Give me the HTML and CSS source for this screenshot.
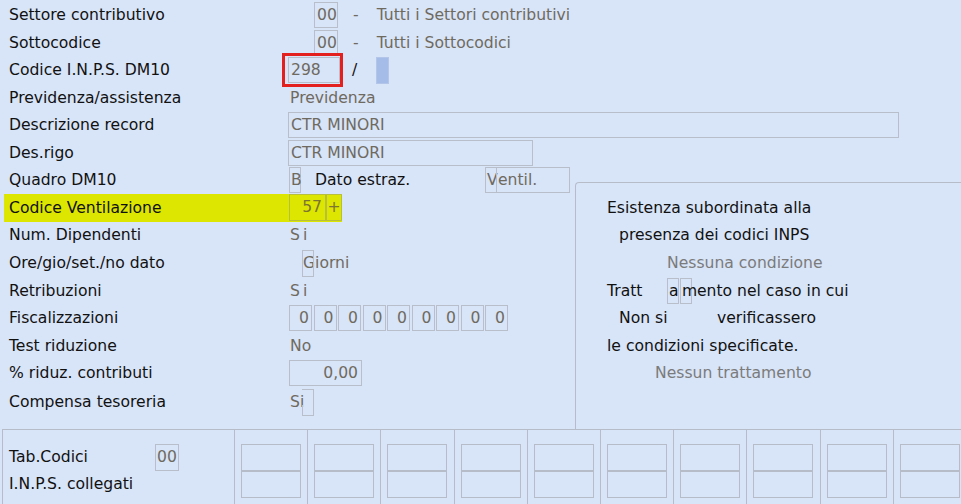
FILE: index.html
```html
<!DOCTYPE html>
<html>
<head>
<meta charset="utf-8">
<link rel="stylesheet" href="styles.css">
</head>
<body>
<div class="screen">
  <div class="form">
    <div class="row"><span class="lbl">Settore contributivo</span><span class="val"><span class="box code">00</span><span class="dash">-</span><span class="desc">Tutti i Settori contributivi</span></span></div>
    <div class="row"><span class="lbl">Sottocodice</span><span class="val"><span class="box code">00</span><span class="dash">-</span><span class="desc">Tutti i Sottocodici</span></span></div>
    <div class="row"><span class="lbl">Codice I.N.P.S. DM10</span><span class="val"><span class="box inps marked">298</span><span class="slash">/</span><span class="bluebox"></span></span></div>
    <div class="row"><span class="lbl">Previdenza/assistenza</span><span class="val"><span class="plain">Previdenza</span></span></div>
    <div class="row"><span class="lbl">Descrizione record</span><span class="val"><span class="box wide">CTR MINORI</span></span></div>
    <div class="row"><span class="lbl">Des.rigo</span><span class="val"><span class="box mid">CTR MINORI</span></span></div>
  </div>
  <div class="middle">
    <div class="form">
      <div class="row"><span class="lbl">Quadro DM10</span><span class="val"><span class="box narrow b">B</span><span class="estr">Dato estraz.</span><span class="box narrow v">V</span><span class="box ventil">entil.</span></span></div>
      <div class="row hl"><span class="lbl">Codice Ventilazione</span><span class="val"><span class="box ybox num">57</span><span class="box ybox plus">+</span></span></div>
      <div class="row"><span class="lbl">Num. Dipendenti</span><span class="val"><span class="plain spaced">Si</span></span></div>
      <div class="row"><span class="lbl">Ore/gio/set./no dato</span><span class="val"><span class="gbox">Giorni</span></span></div>
      <div class="row"><span class="lbl">Retribuzioni</span><span class="val"><span class="plain spaced">Si</span></span></div>
      <div class="row"><span class="lbl">Fiscalizzazioni</span><span class="val fisc"><span class="box digit">0</span><span class="box digit">0</span><span class="box digit">0</span><span class="box digit">0</span><span class="box digit">0</span><span class="box digit">0</span><span class="box digit">0</span><span class="box digit">0</span><span class="box digit">0</span></span></div>
      <div class="row"><span class="lbl">Test riduzione</span><span class="val"><span class="plain">No</span></span></div>
      <div class="row"><span class="lbl">% riduz. contributi</span><span class="val"><span class="box perc num">0,00</span></span></div>
      <div class="row"><span class="lbl">Compensa tesoreria</span><span class="val"><span class="sibox">Si</span></span></div>
    </div>
    <div class="panel">
      <div class="pl">Esistenza subordinata alla</div>
      <div class="pl in1">presenza dei codici INPS</div>
      <div class="pl grey in2">Nessuna condizione</div>
      <div class="pl"><span class="tratt">Tratt</span><span class="box pbox">a</span><span class="box pbox mbox">m</span><span class="ento">ento nel caso in cui</span></div>
      <div class="pl in1"><span class="nonsi">Non si</span><span>verificassero</span></div>
      <div class="pl">le condizioni specificate.</div>
      <div class="pl grey in3">Nessun trattamento</div>
    </div>
  </div>
  <div class="bottom">
    <div class="tab">
      <span class="blbl">Tab.Codici</span><span class="box tabbox">00</span>
      <span class="blbl">I.N.P.S. collegati</span><span></span>
    </div>
    <div class="col"><span class="cbox"></span><span class="cbox"></span></div>
    <div class="col"><span class="cbox"></span><span class="cbox"></span></div>
    <div class="col"><span class="cbox"></span><span class="cbox"></span></div>
    <div class="col"><span class="cbox"></span><span class="cbox"></span></div>
    <div class="col"><span class="cbox"></span><span class="cbox"></span></div>
    <div class="col"><span class="cbox"></span><span class="cbox"></span></div>
    <div class="col"><span class="cbox"></span><span class="cbox"></span></div>
    <div class="col"><span class="cbox"></span><span class="cbox"></span></div>
    <div class="col"><span class="cbox"></span><span class="cbox"></span></div>
    <div class="col"><span class="cbox"></span><span class="cbox"></span></div>
  </div>
</div>
</body>
</html>
```
FILE: styles.css
```css
html, body {
  margin: 0;
  padding: 0;
}
body {
  background: #d8e4f7;
  font-family: "DejaVu Sans", Verdana, sans-serif;
  font-size: 15.6px;
  color: #111;
  width: 961px;
  height: 504px;
  overflow: hidden;
}
.screen {
  padding-top: 1.2px;
  height: 504px;
  box-sizing: border-box;
  display: flex;
  flex-direction: column;
}
.row {
  display: grid;
  grid-template-columns: 284px auto;
  height: 27.57px;
  align-items: center;
  margin-left: 4px;
  white-space: nowrap;
}
.row.hl {
  width: max-content;
  background: #dce600;
}
.lbl {
  padding-left: 5px;
}
.val {
  display: flex;
  align-items: center;
  color: #6f6a60;
}
.box {
  display: inline-block;
  box-sizing: border-box;
  height: 26px;
  line-height: 24px;
  border: 1px solid #b9bfca;
  padding: 0 2px;
  color: #6f6a60;
  white-space: nowrap;
  overflow: hidden;
}
.code {
  margin-left: 26px;
  width: 24px;
  padding: 0 0 0 2px;
}
.dash {
  margin-left: 15px;
}
.desc {
  margin-left: 18px;
}
.inps {
  width: 52px;
  overflow: visible;
}
.marked {
  position: relative;
}
.marked::after {
  content: "";
  position: absolute;
  left: -7px;
  top: -5px;
  right: -4px;
  bottom: -5px;
  border: 3px solid #e3201e;
}
.slash {
  margin-left: 12px;
  color: #111;
}
.bluebox {
  display: inline-block;
  margin-left: 19px;
  width: 13px;
  height: 27px;
  box-sizing: border-box;
  background: #a5bce8;
  border: 1px solid #b3c6ea;
}
.plain {
  padding-left: 2px;
}
.spaced {
  letter-spacing: 3px;
}
.wide {
  width: 611px;
}
.mid {
  width: 245px;
}
.narrow {
  width: 12px;
  padding: 0 0 0 1px;
  overflow: visible;
}
.b {
  margin-left: 1px;
}
.estr {
  margin-left: 14px;
  width: 170px;
  color: #111;
}
.ventil {
  width: 74px;
  margin-left: -1px;
  padding: 0 0 0 1px;
}
.ybox {
  border-color: #b8bf3c;
  color: #7c7430;
  height: 27px;
  line-height: 25px;
}
.num {
  text-align: right;
  padding: 0 3px 0 0;
}
.ybox.num {
  width: 37px;
  margin-left: 1px;
}
.plus {
  width: 16px;
  padding: 0;
  text-align: center;
}
.gbox {
  position: relative;
  display: inline-block;
  margin-left: 14px;
  height: 27px;
  line-height: 27px;
  padding-left: 1px;
}
.gbox::before {
  content: "";
  position: absolute;
  left: 0;
  top: 0;
  width: 12px;
  height: 27px;
  box-sizing: border-box;
  border: 1px solid #b9bfca;
}
.fisc {
  gap: 1.5px;
}
.digit {
  width: 23px;
  text-align: right;
  padding: 0 2px 0 0;
}
.fisc .digit:first-child {
  margin-left: 1px;
}
.perc {
  width: 73px;
  margin-left: 1px;
}
.sibox {
  position: relative;
  display: inline-block;
  height: 27px;
  line-height: 27px;
  padding-left: 2px;
  margin-top: 2px;
}
.sibox::before {
  content: "";
  position: absolute;
  left: 14px;
  top: 0;
  width: 12px;
  height: 27px;
  box-sizing: border-box;
  border: 1px solid #b9bfca;
  border-left: none;
}
.sibox::after {
  content: "";
  position: absolute;
  left: 14px;
  top: 16px;
  width: 1px;
  height: 11px;
  background: #b9bfca;
}
.middle {
  display: grid;
  grid-template-columns: 575px 1fr;
  height: 262.4px;
}
.panel {
  margin-top: 15.4px;
  border-left: 1px solid #b6bdc9;
  border-top: 1px solid #b6bdc9;
  border-top-left-radius: 4px;
  padding-top: 11.2px;
  padding-left: 31px;
  white-space: nowrap;
}
.pl {
  height: 27.57px;
  display: flex;
  align-items: center;
}
.in1 {
  padding-left: 12px;
}
.in2 {
  padding-left: 60px;
}
.in3 {
  padding-left: 48px;
}
.grey {
  color: #7b7b7b;
}
.tratt {
  display: inline-block;
  width: 60px;
}
.pbox {
  width: 12px;
  padding: 0 0 0 1px;
  color: #111;
  margin-right: 1px;
}
.mbox {
  overflow: visible;
  margin-right: 0;
}
.ento {
  margin-left: 5px;
}
.nonsi {
  display: inline-block;
  width: 98px;
}
.bottom {
  margin-left: 2px;
  border-top: 1px solid #b6bdc9;
  border-left: 1px solid #b6bdc9;
  height: 75px;
  box-sizing: border-box;
  display: flex;
  overflow: hidden;
}
.tab {
  flex: 0 0 231px;
  display: grid;
  grid-template-columns: 146px 24px;
  grid-auto-rows: 27px;
  align-items: center;
  padding-top: 14px;
  padding-left: 6px;
  box-sizing: border-box;
  white-space: nowrap;
}
.tabbox {
  width: 24px;
  height: 27px;
  line-height: 25px;
  padding: 0 0 0 1px;
}
.col {
  flex: 0 0 73.2px;
  box-sizing: border-box;
  border-left: 1px solid #b6bdc9;
  padding-top: 14px;
  padding-left: 6px;
  display: flex;
  flex-direction: column;
}
.cbox {
  display: block;
  width: 60px;
  height: 27px;
  box-sizing: border-box;
  border: 1px solid #b6bdc9;
}
```
